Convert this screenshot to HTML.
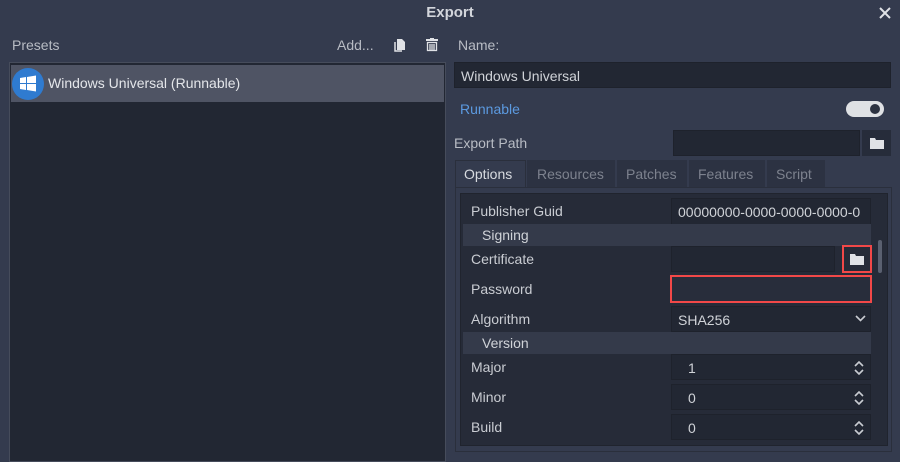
<!DOCTYPE html>
<html><head><style>
*{box-sizing:border-box;margin:0;padding:0}
body{width:900px;height:459px;background:#343b4e;font-family:"Liberation Sans",sans-serif;font-size:14px;color:#c9ccd2;position:relative;overflow:hidden}
.a{position:absolute}
.lbl{position:absolute;line-height:16px;white-space:nowrap}
.fld{position:absolute;background:#222733;border:1px solid #1e222c}
.val{position:absolute;left:6px;top:5px;color:#d0d3d8;white-space:nowrap}
.spin{position:absolute;right:6px;top:5px;width:10px;height:16px}
</style></head><body>
<div class="lbl" style="left:0;width:900px;text-align:center;top:5px;font-weight:bold;font-size:15px;color:#d3d6dc">Export</div>
<svg class="a" style="left:879px;top:7px" width="12" height="12"><path d="M1 1L11 11M11 1L1 11" stroke="#e0e2e6" stroke-width="2"/></svg>

<div class="lbl" style="left:12px;top:37px;color:#b8bcc4">Presets</div>
<div class="lbl" style="left:337px;top:37px;color:#b8bcc4">Add...</div>
<svg class="a" style="left:394px;top:38px" width="13" height="14"><path d="M3 1h5l3 3v8H3z" fill="#e0e2e6"/><path d="M1 4v9h7" stroke="#e0e2e6" stroke-width="1.5" fill="none"/></svg>
<svg class="a" style="left:425px;top:38px" width="14" height="14"><rect x="1" y="1" width="12" height="2" fill="#e0e2e6"/><rect x="5" y="0" width="4" height="2" fill="#e0e2e6"/><path d="M2.5 4.5h9v8h-9z M5 6v6 M7 6v6 M9 6v6" stroke="#e0e2e6" stroke-width="1.3" fill="none"/></svg>

<div class="a" style="left:9px;top:62px;width:437px;height:400px;background:#222733;border:1px solid #464c5b"></div>
<div class="a" style="left:11px;top:65px;width:433px;height:37px;background:#4f5464"></div>
<div class="a" style="left:12px;top:68px;width:32px;height:32px;border-radius:50%;background:#2f7bd0"></div>
<svg class="a" style="left:19px;top:75px" width="18" height="18"><path d="M1 3l6-1v6H1zM8 2l9-1.5V8H8zM1 9h6v6l-6-1zM8 9h9v7.5L8 15z" fill="#fff"/></svg>
<div class="lbl" style="left:48px;top:75px;color:#e4e6ea">Windows Universal (Runnable)</div>

<div class="lbl" style="left:458px;top:37px;color:#b8bcc4">Name:</div>
<div class="fld" style="left:454px;top:62px;width:437px;height:26px"><span class="val" style="left:6px">Windows Universal</span></div>
<div class="lbl" style="left:460px;top:101px;color:#5c9ae0">Runnable</div>
<div class="a" style="left:846px;top:101px;width:38px;height:16px;border-radius:8px;background:#dfe1e4"></div>
<div class="a" style="left:870px;top:104px;width:10px;height:10px;border-radius:50%;background:#2c3240"></div>

<div class="lbl" style="left:454px;top:135px;color:#b8bcc4">Export Path</div>
<div class="fld" style="left:673px;top:130px;width:187px;height:26px"></div>
<div class="a" style="left:862px;top:130px;width:29px;height:26px;background:#262c3a"></div>
<svg class="a" style="left:870px;top:137px" width="14" height="12"><path d="M0 1h5l1 2h8v9H0z" fill="#e0e2e6"/></svg>

<div class="a" style="left:455px;top:160px;width:71px;height:28px;background:#343b4e;border:1px solid #2a2f3c;border-bottom:none"></div>
<div class="lbl" style="left:464px;top:166px;color:#d8dbe0">Options</div>
<div class="a" style="left:527px;top:160px;width:88px;height:27px;background:#2c3242"></div>
<div class="lbl" style="left:537px;top:166px;color:#7d828e">Resources</div>
<div class="a" style="left:617px;top:160px;width:70px;height:27px;background:#2c3242"></div>
<div class="lbl" style="left:626px;top:166px;color:#7d828e">Patches</div>
<div class="a" style="left:689px;top:160px;width:76px;height:27px;background:#2c3242"></div>
<div class="lbl" style="left:698px;top:166px;color:#7d828e">Features</div>
<div class="a" style="left:767px;top:160px;width:58px;height:27px;background:#2c3242"></div>
<div class="lbl" style="left:776px;top:166px;color:#7d828e">Script</div>

<div class="a" style="left:455px;top:187px;width:437px;height:265px;border:1px solid #2a2f3c;background:#343b4e"></div>
<div class="a" style="left:460px;top:193px;width:428px;height:253px;background:#262b38;border:1px solid #20242e"></div>
<div class="a" style="left:878px;top:240px;width:4px;height:33px;background:#5a6070;border-radius:2px"></div>

<div class="lbl" style="left:471px;top:203px">Publisher Guid</div>
<div class="fld" style="left:671px;top:198px;width:200px;height:27px;overflow:hidden"><span class="val">00000000-0000-0000-0000-0</span></div>
<div class="a" style="left:463px;top:224px;width:408px;height:22px;background:#343a4a"></div>
<div class="lbl" style="left:482px;top:227px;color:#d0d3d8">Signing</div>
<div class="lbl" style="left:471px;top:251px">Certificate</div>
<div class="fld" style="left:671px;top:246px;width:164px;height:26px"></div>
<div class="a" style="left:842px;top:245px;width:30px;height:28px;border:2px solid #f24848"></div>
<svg class="a" style="left:850px;top:253px" width="14" height="12"><path d="M0 1h5l1 2h8v9H0z" fill="#e0e2e6"/></svg>
<div class="lbl" style="left:471px;top:281px">Password</div>
<div class="a" style="left:670px;top:275px;width:202px;height:28px;border:2px solid #f24848;background:#282d3b"></div>
<div class="lbl" style="left:471px;top:311px">Algorithm</div>
<div class="fld" style="left:671px;top:306px;width:200px;height:26px"><span class="val">SHA256</span></div>
<svg class="a" style="left:855px;top:315px" width="11" height="8"><path d="M1 1l4.5 4.5L10 1" stroke="#c9ccd2" stroke-width="1.6" fill="none"/></svg>
<div class="a" style="left:463px;top:332px;width:408px;height:22px;background:#343a4a"></div>
<div class="lbl" style="left:482px;top:335px;color:#d0d3d8">Version</div>

<div class="lbl" style="left:471px;top:359px">Major</div>
<div class="fld" style="left:671px;top:354px;width:200px;height:26px"><span class="val" style="left:16px">1</span><svg class="spin" width="10" height="16"><path d="M1 6l4-4 4 4M1 10l4 4 4-4" stroke="#c9ccd2" stroke-width="1.6" fill="none"/></svg></div>
<div class="lbl" style="left:471px;top:389px">Minor</div>
<div class="fld" style="left:671px;top:384px;width:200px;height:26px"><span class="val" style="left:16px">0</span><svg class="spin" width="10" height="16"><path d="M1 6l4-4 4 4M1 10l4 4 4-4" stroke="#c9ccd2" stroke-width="1.6" fill="none"/></svg></div>
<div class="lbl" style="left:471px;top:419px">Build</div>
<div class="fld" style="left:671px;top:414px;width:200px;height:26px"><span class="val" style="left:16px">0</span><svg class="spin" width="10" height="16"><path d="M1 6l4-4 4 4M1 10l4 4 4-4" stroke="#c9ccd2" stroke-width="1.6" fill="none"/></svg></div>
</body></html>
